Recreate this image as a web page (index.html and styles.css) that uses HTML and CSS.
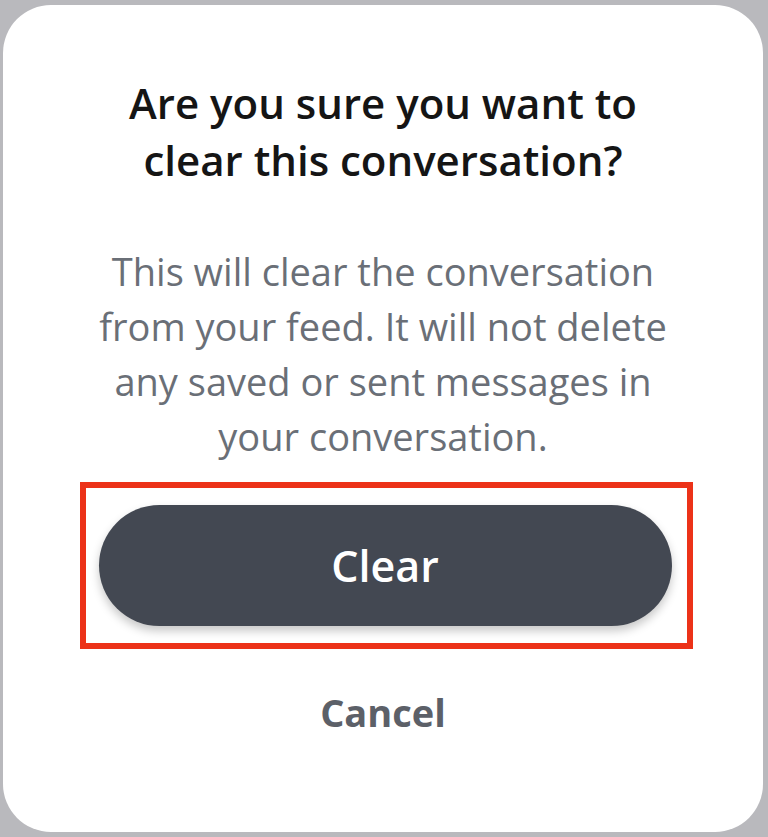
FILE: index.html
```html
<!DOCTYPE html>
<html lang="en">
<head>
    <meta charset="UTF-8">
    <meta name="viewport" content="width=device-width, initial-scale=1.0">
    <title>Clear conversation</title>
    <link rel="stylesheet" href="styles.css">
</head>
<body>
    <div class="dialog">
        <h1 class="dialog-title">Are you sure you want to<br>clear this conversation?</h1>
        <p class="dialog-text">This will clear the conversation<br>from your feed. It will not delete<br>any saved or sent messages in<br>your conversation.</p>
        <div class="highlight">
            <button class="clear-btn">Clear</button>
        </div>
        <button class="cancel-btn">Cancel</button>
    </div>
</body>
</html>
```

FILE: styles.css
```css
* {
    margin: 0;
    padding: 0;
    box-sizing: border-box;
}

body {
    font-family: 'Open Sans', 'Lato', sans-serif;
    background-color: #b9b9bd;
    height: 837px;
    padding: 5px 5px 5px 3px;
}

.dialog {
    background: #fff;
    height: 827px;
    border-radius: 48px;
    display: flex;
    flex-direction: column;
    align-items: center;
    padding-top: 69px;
}

.dialog-title {
    font-size: 42px;
    font-weight: 600;
    line-height: 57px;
    color: #151515;
    text-align: center;
}

.dialog-text {
    margin-top: 56px;
    font-size: 38px;
    line-height: 55px;
    color: #6a6f77;
    text-align: center;
}

.highlight {
    margin-top: 18px;
    margin-left: 6px;
    width: 613px;
    height: 167px;
    border: 6px solid #ec3218;
    padding: 17px 15px 0 13px;
}

.clear-btn {
    width: 100%;
    height: 121px;
    border: none;
    border-radius: 61px;
    background: #434852;
    color: #fff;
    font-family: inherit;
    font-size: 43px;
    font-weight: 600;
    box-shadow: 0 5px 10px rgba(0, 0, 0, 0.22);
    cursor: pointer;
}

.cancel-btn {
    margin-top: 37px;
    border: none;
    background: none;
    color: #5c6068;
    font-family: inherit;
    font-size: 38px;
    font-weight: 700;
    cursor: pointer;
}
```
